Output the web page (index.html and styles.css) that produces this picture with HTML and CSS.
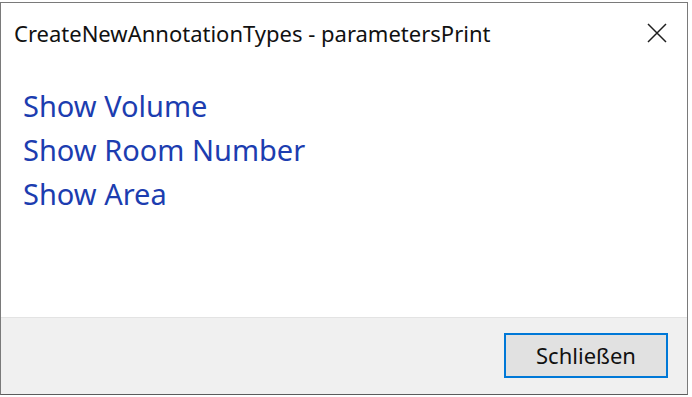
FILE: index.html
```html
<!DOCTYPE html>
<html lang="de">
<head>
  <meta charset="UTF-8">
  <title>CreateNewAnnotationTypes - parametersPrint</title>
  <link rel="stylesheet" href="styles.css">
</head>
<body>
  <div class="window">
    <div class="titlebar">
      <span class="title">CreateNewAnnotationTypes - parametersPrint</span>
      <span class="close" title="Schließen">
        <svg width="20" height="20" viewBox="0 0 20 20">
          <path d="M1 1 L19 19 M19 1 L1 19" stroke="#1f1f1f" stroke-width="1.5" fill="none"/>
        </svg>
      </span>
    </div>
    <div class="content">
      <a class="link" href="#">Show Volume</a>
      <a class="link" href="#">Show Room Number</a>
      <a class="link" href="#">Show Area</a>
    </div>
    <div class="footer">
      <button type="button" class="btn">Schließen</button>
    </div>
  </div>
</body>
</html>
```

FILE: styles.css
```css
html, body {
  margin: 0;
  padding: 0;
}
body {
  width: 692px;
  height: 397px;
  background-color: #fff;
  font-family: "Noto Sans", "Open Sans", sans-serif;
  overflow: hidden;
}
.window {
  box-sizing: border-box;
  width: 688px;
  height: 393px;
  margin-top: 2px;
  border: 1px solid #7a7a7a;
  border-bottom-color: #5c5c5c;
  background: #fff;
  display: flex;
  flex-direction: column;
}
.titlebar {
  height: 60px;
  display: flex;
  align-items: center;
  justify-content: space-between;
  padding-left: 13px;
  padding-right: 20px;
}
.title {
  font-size: 22px;
  color: #111;
}
.close {
  display: flex;
  width: 20px;
  height: 20px;
}
.content {
  flex: 1;
  display: flex;
  flex-direction: column;
  padding-left: 22px;
  padding-top: 21px;
}
.link {
  font-size: 29px;
  line-height: 44px;
  color: #1c3db0;
  text-decoration: none;
}
.footer {
  height: 76px;
  background-color: #f0f0f0;
  border-top: 1px solid #e3e3e3;
  display: flex;
  justify-content: flex-end;
  align-items: center;
  padding-right: 19px;
}
.btn {
  width: 164px;
  height: 45px;
  margin-top: -2px;
  background-color: #e1e1e1;
  border: 2px solid #0078d7;
  font-family: inherit;
  font-size: 22px;
  color: #111;
  padding: 0;
}
```
